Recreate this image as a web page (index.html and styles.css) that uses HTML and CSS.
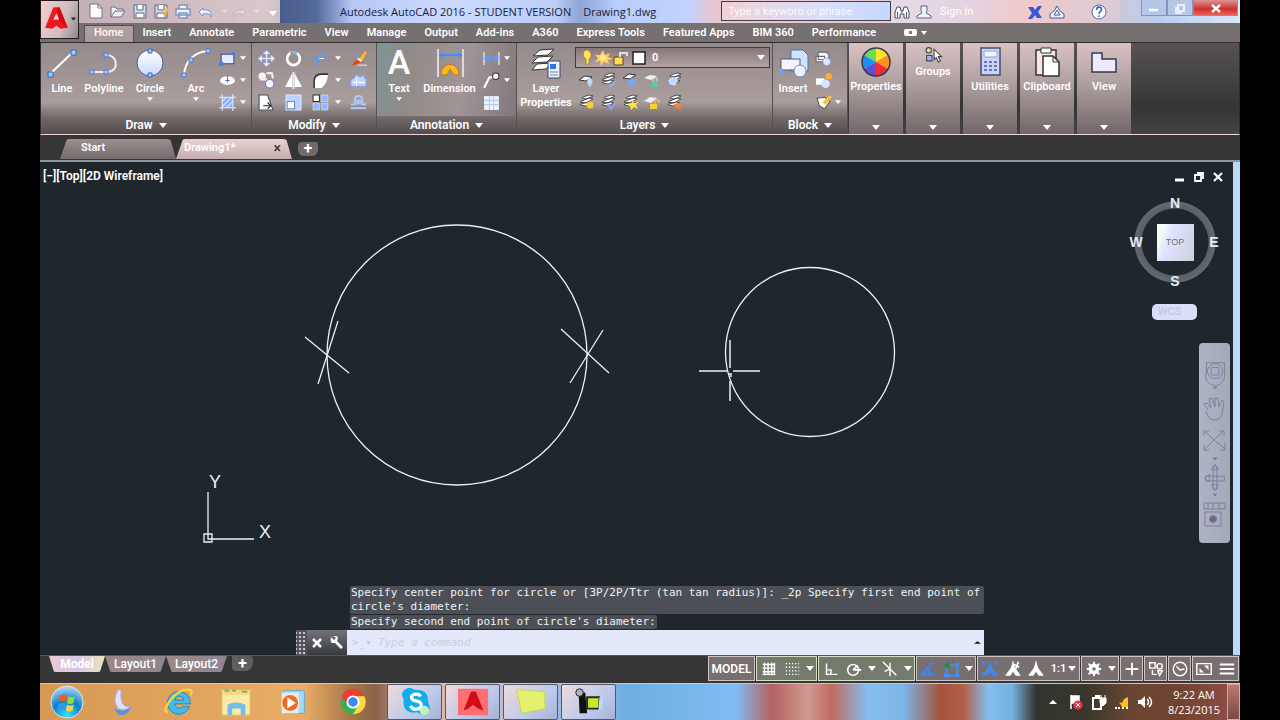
FILE: index.html
```html
<!DOCTYPE html>
<html lang="en">
<head>
<meta charset="utf-8">
<title>Autodesk AutoCAD 2016 - Drawing1.dwg</title>
<link rel="stylesheet" href="styles.css">
</head>
<body>
<svg class="defs" aria-hidden="true">
  <defs>
    <linearGradient id="whiteBlue" x1="0" y1="0" x2="0" y2="1"><stop offset="0" stop-color="#ffffff"/><stop offset="1" stop-color="#c9d8ff"/></linearGradient>
    <radialGradient id="orb" cx=".5" cy=".9" r=".9"><stop offset="0" stop-color="#3fe0ff"/><stop offset=".5" stop-color="#0f7fc8"/><stop offset="1" stop-color="#b8dcf4"/></radialGradient>
    <symbol id="tri" viewBox="0 0 8 5"><path d="M0 0h8L4 5z" fill="currentColor"/></symbol>
    <symbol id="layers" viewBox="0 0 16 16"><path d="M4 7l7-3 4 1-7 4-6-1zM3 10l7-2 4 1-6 3-6-1zM5 3l6-2 4 1-6 3-5-1z" fill="#fff" stroke="#333" stroke-width=".8"/></symbol>
    <symbol id="person" viewBox="0 0 20 20"><path d="M10 1v6M10 3L8 9 2 17h5l3-5 3 5h5l-6-8-2-6z" fill="currentColor" stroke="currentColor" stroke-width="1"/></symbol>
  </defs>
</svg>
<div class="app">
  <header class="top">
    <div class="titlebar">
      <div class="quick">
        <button aria-label="New"><svg viewBox="0 0 16 16"><path d="M2 1h8l4 4v10H2z" fill="#fffafa" stroke="#77738c"/><path d="M10 1v4h4" fill="none" stroke="#77738c"/></svg></button>
        <button aria-label="Open"><svg viewBox="0 0 16 16"><path d="M1 14V4h4l2 2h6v2M1 14l4-6h10l-4 6z" fill="#f5eeee" stroke="#66708c"/></svg></button>
        <button aria-label="Save"><svg viewBox="0 0 16 16"><path d="M2 2h12v13H2z" fill="#d8e0f5" stroke="#596780"/><path d="M5 2v5h6V2M4 14v-4h8v4" fill="#fff" stroke="#596780"/></svg></button>
        <button aria-label="Save as"><svg viewBox="0 0 16 16"><path d="M2 2h12v13H2z" fill="#d8e0f5" stroke="#596780"/><path d="M5 2v5h6V2M4 14v-4h8v4" fill="#fff" stroke="#596780"/><path d="M10 12l4-8 2 2-4 7z" fill="#ffae2e"/></svg></button>
        <button aria-label="Plot"><svg viewBox="0 0 16 16"><path d="M4 6V2h8v4M1 6h14v6H1zM4 10h8v5H4z" fill="#eef2ff" stroke="#8594bb" stroke-width="1.500"/></svg></button>
        <button aria-label="Undo"><svg viewBox="0 0 16 16"><path d="M2 9l4-4v2c6-1 9 2 8 7-1-3-3-4-8-3v2z" fill="#e9efff" stroke="#8594bb"/></svg></button>
        <button class="faint" aria-label="Undo list"><svg viewBox="0 0 16 16"><path d="M6 7h5l-2.500 3z" fill="#fff"/></svg></button>
        <button class="faint" aria-label="Redo"><svg viewBox="0 0 16 16"><path d="M14 9l-4-4v2C4 6 1 9 2 14c1-3 3-4 8-3v2z" fill="#e9e4ea" stroke="#a9a0aa"/></svg></button>
        <button class="faint" aria-label="Redo list"><svg viewBox="0 0 16 16"><path d="M6 7h5l-2.500 3z" fill="#fff"/></svg></button>
        <button aria-label="Customize"><svg viewBox="0 0 16 16"><path d="M5 8h8l-4 5z" fill="#fff"/></svg></button>
      </div>
      <div class="caption"><span>Autodesk AutoCAD 2016 - STUDENT VERSION</span><span>Drawing1.dwg</span></div>
      <input class="search" type="text" placeholder="Type a keyword or phrase" aria-label="Search help">
      <div class="info">
        <button aria-label="Search"><svg viewBox="0 0 16 16"><path d="M1 14V8l2-5h3l1 4h2l1-4h3l2 5v6h-5v-4H6v4z" fill="#fff" stroke="#444a5c"/><path d="M3.500 8v5M12.500 8v5M7 8h2" stroke="#444a5c"/></svg></button>
        <button class="sign" aria-label="Account"><svg viewBox="0 0 16 16"><path d="M5 2h6v5l-1 2 5 3v2H1v-2l5-3-1-2z" fill="#eaf0ff" stroke="#667"/></svg><span>Sign In</span></button>
        <button class="x-icon" aria-label="Exchange apps"><svg viewBox="0 0 16 16"><path d="M1 3h5l2 3 3-4h4l-4 6 4 6h-5l-2-3-3 4H1l4-6z" fill="#3456d8"/></svg></button>
        <button aria-label="Autodesk 360"><svg viewBox="0 0 16 16"><path d="M8 2l3 5 4 3v4H1v-4l4-3z" fill="#eef0ff" stroke="#4c5b8c"/><path d="M8 6l3 5H5z" fill="none" stroke="#4c5b8c"/></svg></button>
        <button class="help" aria-label="Help"><svg viewBox="0 0 16 16"><circle cx="8" cy="8" r="7" fill="#fff" stroke="#56658c"/><path d="M5.500 6c0-4 5-3.500 5-.5C10.500 7.500 8 7.500 8 10M8 11.500v1.500" fill="none" stroke="#2667dc" stroke-width="1.600"/></svg></button>
      </div>
      <div class="window-buttons"><button aria-label="Minimize"><svg viewBox="0 0 12 12"><path d="M1 8h9" stroke="#fff" stroke-width="2.500"/></svg></button><button aria-label="Restore"><svg viewBox="0 0 12 12"><path d="M4 3h6v6H4zM2 5v6h6" fill="none" stroke="#fff" stroke-width="1.500"/></svg></button><button class="close" aria-label="Close"><svg viewBox="0 0 12 12"><path d="M2 3l8 7M10 3l-8 7" stroke="#fff" stroke-width="2.500"/></svg></button></div>
    </div>
    <nav class="menu">
      <a class="current" href="#">Home</a><a href="#">Insert</a><a href="#">Annotate</a><a href="#">Parametric</a><a href="#">View</a><a href="#">Manage</a><a href="#">Output</a><a href="#">Add-ins</a><a href="#">A360</a><a href="#">Express Tools</a><a href="#">Featured Apps</a><a href="#">BIM 360</a><a href="#">Performance</a>
      <button class="ribbon-state" aria-label="Ribbon display"><svg viewBox="0 0 24 10"><rect x="0" y="1" width="13" height="7" rx="2" fill="#fff"/><path d="M5 3h3v3H5z" fill="#777"/><path d="M17 3h6l-3 4z" fill="#fff"/></svg></button>
    </nav>
    <button class="app-menu" aria-label="Application menu"><svg viewBox="0 0 36 36"><path d="M4 26L12 6h6l8 20-7 1-4-3-4 3z" fill="#f01820"/><path d="M12 18l3-6 3 6z" fill="#ffd9d9"/><path d="M15 8l3 12 8 6-8-20z" fill="#d80812"/><path d="M29 16h5l-2.500 3z" fill="#222"/></svg></button>
  </header>

  <div class="ribbon">
    <section class="panel draw">
      <div class="tools">
        <button class="big"><svg viewBox="0 0 32 32"><path d="M4 27L27 5" stroke="#fff" stroke-width="2"/><path d="M2 25h5v5H2zM25 3h5v5h-5z" fill="#a5ccff" stroke="#2868c8"/></svg><span>Line</span></button>
        <button class="big"><svg viewBox="0 0 32 32"><path d="M4 25h15c13 0 11-18-1-17" fill="none" stroke="#eee9ff" stroke-width="2"/><path d="M2 23h4v4H2zM16 23h4v4h-4zM16 6h4v4h-4z" fill="#a5ccff" stroke="#4a78d8"/></svg><span>Polyline</span></button>
        <button class="big"><svg viewBox="0 0 32 32"><circle cx="16" cy="16" r="13" fill="url(#whiteBlue)" stroke="#54607c"/><path d="M14 2h4v4h-4zM14 26h4v4h-4z" fill="#a5ccff" stroke="#2868c8"/></svg><span>Circle</span><svg class="tri"><use href="#tri"/></svg></button>
        <button class="big"><svg viewBox="0 0 32 32"><path d="M4 28C5 14 14 5 28 4" fill="none" stroke="#fff" stroke-width="2"/><path d="M2 26h4v4H2zM9 11h4v4H9zM26 2h4v4h-4z" fill="#a5ccff" stroke="#4a78d8"/></svg><span>Arc</span><svg class="tri"><use href="#tri"/></svg></button>
        <div class="minis with-arrows">
          <button aria-label="Rectangle"><svg viewBox="0 0 16 16"><path d="M2 4h12v9H2z" fill="#e8edff" stroke="#3c4e86"/><path d="M0 11h4v4H0zM12 2h3v3h-3z" fill="#3a85f0"/></svg></button><button aria-label="Rectangle list"><svg class="tri"><use href="#tri"/></svg></button>
          <button aria-label="Ellipse"><svg viewBox="0 0 16 16"><ellipse cx="8" cy="8" rx="7" ry="4" fill="#fff"/><path d="M8 3v7M6 8h4" stroke="#4a73d0"/></svg></button><button aria-label="Ellipse list"><svg class="tri"><use href="#tri"/></svg></button>
          <button aria-label="Hatch"><svg viewBox="0 0 16 16"><path d="M3 3h10v10H3z" fill="#83b1ff"/><path d="M3 7l4-4M3 12l9-9M7 13l6-6" stroke="#d7e8ff"/><path d="M3 0v16M13 0v16M0 3h16M0 13h16" stroke="#e6edff"/></svg></button><button aria-label="Hatch list"><svg class="tri"><use href="#tri"/></svg></button>
        </div>
      </div>
      <button class="panel-title">Draw <svg class="tri"><use href="#tri"/></svg></button>
    </section>

    <section class="panel modify">
      <div class="tools">
        <div class="minis">
          <button aria-label="Move"><svg viewBox="0 0 16 16"><path d="M8 0l4 4H9v3h3V4l4 4-4 4V9H9v3h3l-4 4-4-4h3V9H4v3L0 8l4-4v3h3V4H4z" fill="#edf1ff" stroke="#7b8ac5" stroke-width=".6"/></svg></button>
          <button aria-label="Rotate"><svg viewBox="0 0 16 16"><path d="M5 3a6 6 0 1 0 6 0" fill="none" stroke="#fff" stroke-width="2.500"/><path d="M3 1h8v4z" fill="#78b8e8"/></svg></button>
          <button aria-label="Trim"><svg viewBox="0 0 16 16"><path d="M0 8h15M10 1L4 15" stroke="#599cff" stroke-width="1.800"/><path d="M7 8h4" stroke="#fff"/></svg></button><button aria-label="Trim list"><svg class="tri"><use href="#tri"/></svg></button>
          <button aria-label="Erase"><svg viewBox="0 0 18 16"><path d="M9 9l7-9 2 1-5 10z" fill="#ffb430"/><path d="M8 8l5 3-3 2-9 3z" fill="#db4a18"/><path d="M8 8l4 3" stroke="#fff" stroke-width="2"/><path d="M8 15h10" stroke="#eef"/></svg></button>
          <button aria-label="Copy"><svg viewBox="0 0 16 16"><circle cx="4" cy="4" r="3.500" fill="#fff1ef"/><path d="M8 1h5l1 5M2 7h6v3" fill="none" stroke="#eee" stroke-width="2"/><circle cx="11" cy="11" r="4" fill="#f7f4ff" stroke="#687fc0"/></svg></button>
          <button aria-label="Mirror"><svg viewBox="0 0 16 16"><path d="M7 1v13H0zM9 1v13h7z" fill="#fff"/><path d="M8 0v16" stroke="#dbe8ff" stroke-width="2"/></svg></button>
          <button aria-label="Fillet"><svg viewBox="0 0 16 16"><path d="M2 15V9q0-7 7-7h6q0 8-6 13z" fill="#fff"/><path d="M2 15V9q0-7 7-7h6" fill="none" stroke="#333" stroke-width="1.500"/></svg></button><button aria-label="Fillet list"><svg class="tri"><use href="#tri"/></svg></button>
          <button aria-label="Explode"><svg viewBox="0 0 18 16"><path d="M1 7l4-2 1-3 5 2 4-2v3l2 2v7H1z" fill="#bed4ff" stroke="#7da3ff"/><path d="M3 10h13M7 5v9" stroke="#fff"/></svg></button>
          <button aria-label="Stretch"><svg viewBox="0 0 16 16"><path d="M1 1h8l5 14H1z" fill="#fff" stroke="#44506a"/><path d="M5 11h6M9 8l3 3-3 3" stroke="#222" fill="none"/></svg></button>
          <button aria-label="Scale"><svg viewBox="0 0 16 16"><path d="M1 1h14v14H1z" fill="#bcd1ff" stroke="#e4eaff"/><path d="M2 7h7v7H2z" fill="#fff" stroke="#6989cb"/></svg></button>
          <button aria-label="Array"><svg viewBox="0 0 16 16"><path d="M1 1h6v6H1z" fill="#fff" stroke="#333"/><path d="M9 1h6v6H9zM1 9h6v6H1zM9 9h6v6H9z" fill="#91b7ff" stroke="#d7e4ff" stroke-width=".6"/></svg></button><button aria-label="Array list"><svg class="tri"><use href="#tri"/></svg></button>
          <button aria-label="Offset"><svg viewBox="0 0 18 16"><path d="M1 10h4V6q0-5 4-5t4 5v4h4M1 14h16" fill="none" stroke="#add2ff" stroke-width="1.800"/><path d="M6 10h6V6q-3-3-6 0z" fill="#aac2f3"/></svg></button>
        </div>
      </div>
      <button class="panel-title">Modify <svg class="tri"><use href="#tri"/></svg></button>
    </section>

    <section class="panel annotation">
      <div class="tools">
        <button class="big"><span class="letter" aria-hidden="true">A</span><span>Text</span><svg class="tri"><use href="#tri"/></svg></button>
        <button class="big"><svg viewBox="0 0 32 32"><path d="M4 2v28M29 2v28" stroke="#f8edf2" stroke-width="1.500"/><path d="M5 8h23" stroke="#438cff" stroke-width="2"/><path d="M5 8l4-3v6zM28 8l-4-3v6z" fill="#438cff"/><path d="M7 28c0-14 18-14 18 0h-5l-4-6-3 6z" fill="#ffb61c" stroke="#b57c22"/></svg><span>Dimension</span></button>
        <div class="minis with-arrows">
          <button aria-label="Linear"><svg viewBox="0 0 16 16"><path d="M1 2v12M15 2v12" stroke="#fff"/><path d="M2 8h12M5 5L2 8l3 3M11 5l3 3-3 3" stroke="#5b9aff" fill="none" stroke-width="1.600"/></svg></button><button aria-label="Linear list"><svg class="tri"><use href="#tri"/></svg></button>
          <button aria-label="Leader"><svg viewBox="0 0 16 16"><path d="M1 15L6 5h4" fill="none" stroke="#fff" stroke-width="2"/><circle cx="12" cy="4" r="3" fill="#fff" stroke="#333"/></svg></button><button aria-label="Leader list"><svg class="tri"><use href="#tri"/></svg></button>
          <button aria-label="Table"><svg viewBox="0 0 16 16"><path d="M1 2h14v13H1z" fill="#eef1ff"/><path d="M1 6h14M1 10h14M6 2v13M10 2v13" stroke="#bcc9ef"/></svg></button>
        </div>
      </div>
      <button class="panel-title">Annotation <svg class="tri"><use href="#tri"/></svg></button>
    </section>

    <section class="panel layers">
      <div class="tools">
        <button class="big"><svg viewBox="0 0 32 32"><path d="M10 3l14-1-6 6-15 1zM8 10l15-1-6 6-15 1zM7 17l14-1-5 6-14 1z" fill="#fff" stroke="#333"/><path d="M18 14h12v17H18z" fill="#eaf0ff" stroke="#3c4964"/><path d="M20 17h6v5h-6z" fill="#2878e8"/><path d="M20 25h8M20 28h8" stroke="#789"/></svg><span>Layer<br>Properties</span></button>
        <div class="layer-side">
          <button class="layer-select" aria-label="Current layer"><svg viewBox="0 0 74 18"><path d="M8 1c5 0 7 6 3 9v5H8v-5C4 7 5 2 8 1z" fill="#ffe34d" stroke="#8e7935" stroke-width=".6"/><path d="M25 1l2 5 5-2-2 4 5 2-5 1 1 4-5-2-3 4-1-5-5 1 3-4-3-3 5 0z" fill="#ffcd61"/><circle cx="25" cy="9" r="3" fill="#ffec8d"/><path d="M36 8h9v8h-9z" fill="#ffe04c" stroke="#55451f"/><path d="M42 8V4h7v3" fill="none" stroke="#e5dde8" stroke-width="2"/><path d="M55 3h12v12H55z" fill="#fff" stroke="#222" stroke-width="1.500"/></svg><span>0</span><svg class="tri"><use href="#tri"/></svg></button>
          <div class="layer-grid">
            <button aria-label="Layer off"><svg viewBox="0 0 16 16"><path d="M1 8l6-4 7 1-6 4z" fill="#fff" stroke="#333"/><path d="M11 6c6 1 3 6 1 9-4-4-3-8-1-9" fill="#b8d8ff"/></svg></button>
            <button aria-label="Isolate layer"><svg viewBox="0 0 16 16"><use href="#layers"/><path d="M9 12l2 3 4-6" stroke="#87adff" stroke-width="2" fill="none"/></svg></button>
            <button aria-label="Freeze layer"><svg viewBox="0 0 16 16"><path d="M1 6l6-4 7 1-6 4z" fill="#fff" stroke="#333"/><path d="M10 6v9M6 8l8 5M14 8l-8 5" stroke="#72a9ff" stroke-width="2"/></svg></button>
            <button aria-label="Lock layer"><svg viewBox="0 0 16 16"><path d="M0 6l6-3 7 1-6 4z" fill="#f7eef5"/><path d="M8 9h6v6H8z" fill="#5cc9a0"/><path d="M9 9V6h4v3" fill="none" stroke="#d6eee2"/></svg></button>
            <button aria-label="Make current"><svg viewBox="0 0 16 16"><use href="#layers"/><path d="M2 8q5-6 10 0l-3 6-6-2z" fill="#bddcff"/></svg></button>
            <button aria-label="Turn all on"><svg viewBox="0 0 16 16"><use href="#layers"/><circle cx="12" cy="11" r="3.500" fill="#ffca35"/></svg></button>
            <button aria-label="Unisolate"><svg viewBox="0 0 16 16"><use href="#layers"/><path d="M8 10l3 5 4-6" stroke="#84a3ff" stroke-width="2" fill="none"/></svg></button>
            <button aria-label="Thaw all"><svg viewBox="0 0 16 16"><use href="#layers"/><path d="M11 6l1 3 4-1-2 3 2 4-4-2-3 3-1-4-3-1 4-1z" fill="#ffe136"/></svg></button>
            <button aria-label="Unlock"><svg viewBox="0 0 16 16"><path d="M0 7l6-4 7 1-6 5z" fill="#f7eef5"/><path d="M6 10h7v5H6z" fill="#ffcf30"/><path d="M11 10V6h4v3" fill="none" stroke="#eac653"/></svg></button>
            <button aria-label="Match layer"><svg viewBox="0 0 16 16"><use href="#layers"/><path d="M8 10l6-1 1 6-6-1z" fill="#ff7c3a"/></svg></button>
          </div>
        </div>
      </div>
      <button class="panel-title">Layers <svg class="tri"><use href="#tri"/></svg></button>
    </section>

    <section class="panel block">
      <div class="tools">
        <button class="big"><svg viewBox="0 0 32 32"><path d="M14 3h12l5 5v16H14z" fill="#cfe2ff" stroke="#54719e"/><path d="M4 12h19v11H4z" fill="#f2f5ff" stroke="#4b5c7c"/><circle cx="23" cy="24" r="6" fill="#edf2ff" stroke="#6d8ac3"/><path d="M2 22h4v4H2z" fill="#65a9ff"/></svg><span>Insert</span></button>
        <div class="minis with-arrows">
          <button aria-label="Create block"><svg viewBox="0 0 16 16"><path d="M3 2h8l2 3v4H3zM1 6h8v5H1z" fill="#fffafa" stroke="#667"/><circle cx="11" cy="11" r="3.500" fill="#dfe8ff" stroke="#99a8cc"/></svg></button><span></span>
          <button aria-label="Edit block"><svg viewBox="0 0 16 16"><path d="M1 6h8v6H1z" fill="#fff"/><circle cx="10" cy="11" r="4" fill="#d5e3ff"/><circle cx="13" cy="4" r="3" fill="#ffac36"/></svg></button><span></span>
          <button aria-label="Edit attributes"><svg viewBox="0 0 16 16"><path d="M2 4l7-1 5 4-5 7-5-3z" fill="#fffce9" stroke="#555"/><path d="M7 8l7-7 2 2-6 7z" fill="#ffbd40"/></svg></button><button aria-label="Attribute list"><svg class="tri"><use href="#tri"/></svg></button>
        </div>
      </div>
      <button class="panel-title">Block <svg class="tri"><use href="#tri"/></svg></button>
    </section>

    <div class="folded">
      <button><svg viewBox="0 0 32 32"><path d="M16 16V2A14 14 0 0 1 28 9z" fill="#ffe52e"/><path d="M16 16L28 9a14 14 0 0 1 0 14z" fill="#ff8f20"/><path d="M16 16l12 7a14 14 0 0 1-12 7z" fill="#f52d32"/><path d="M16 16v14A14 14 0 0 1 4 23z" fill="#644bd8"/><path d="M16 16L4 23A14 14 0 0 1 4 9z" fill="#1b90f0"/><path d="M16 16L4 9a14 14 0 0 1 12-7z" fill="#69e052"/><circle cx="16" cy="16" r="14" fill="none" stroke="#333c4c" stroke-width="1.500"/></svg><span>Properties</span><svg class="tri"><use href="#tri"/></svg></button>
      <button><svg class="short" viewBox="0 0 16 16"><circle cx="4" cy="4" r="2.500" fill="#d9e98b" stroke="#444"/><path d="M2 9h5v5H2z" fill="#a9b4ff" stroke="#445"/><path d="M9 3v10l2-2 2 4 2-1-2-4h3z" fill="#fff" stroke="#444"/></svg><span>Groups</span><svg class="tri"><use href="#tri"/></svg></button>
      <button><svg viewBox="0 0 32 32"><path d="M7 2h19v27H7z" fill="#c9d4f6" stroke="#46506b" stroke-width="1.500"/><path d="M10 5h13v6H10z" fill="#eef4ff" stroke="#93a0ca"/><path d="M10 16h3m2 0h3m2 0h3M10 20h3m2 0h3m2 0h3M10 24h3m2 0h3m2 0h3" stroke="#6677ba" stroke-width="2"/></svg><span>Utilities</span><svg class="tri"><use href="#tri"/></svg></button>
      <button><svg viewBox="0 0 32 32"><path d="M5 4h20v25H5z" fill="#f7e8df" stroke="#333" stroke-width="1.500"/><path d="M10 2h10v5H10z" fill="#fff" stroke="#333"/><path d="M12 10h10l6 6v14H12z" fill="#fff" stroke="#333" stroke-width="1.500"/><path d="M22 10v6h6" fill="none" stroke="#333"/></svg><span>Clipboard</span><svg class="tri"><use href="#tri"/></svg></button>
      <button><svg viewBox="0 0 32 32"><path d="M4 7h10v6h14v13H4z" fill="#eee9ff" stroke="#36384c" stroke-width="1.500"/></svg><span>View</span><svg class="tri"><use href="#tri"/></svg></button>
    </div>
  </div>

  <nav class="files">
    <a href="#">Start</a>
    <a class="open" href="#"><span class="name">Drawing1*</span><span class="x">×</span></a>
    <button aria-label="New drawing">+</button>
  </nav>

  <main class="canvas">
    <svg class="drawing" viewBox="40 162 1193 493" preserveAspectRatio="xMinYMin meet" role="img" aria-label="Two circles">
      <g fill="none" stroke="#e6f2fa" stroke-width="1.300">
        <circle cx="457" cy="355" r="130"/><circle cx="810" cy="352" r="84.500"/>
        <path d="M305 337L349 373M338 321L318 384M561 329L609 373M603 330L570 383"/>
        <path d="M208 492v47h46M204 534h8v8h-8z"/>
        <path d="M699 371h29M733 371h27M730 340v28M730 381v20M728 374h3v3" stroke-width="1.500"/>
      </g>
      <g class="axis"><text x="209" y="488">Y</text><text x="259" y="538">X</text></g>
    </svg>
    <div class="view-label">[−][Top][2D Wireframe]</div>
    <div class="view-window"><button aria-label="Minimize view"><svg viewBox="0 0 10 10"><path d="M0 8h9" stroke="#fff" stroke-width="3"/></svg></button><button aria-label="Restore view"><svg viewBox="0 0 10 10"><path d="M3 1h6v5H7M1 3h6v6H1z" fill="none" stroke="#fff" stroke-width="1.800"/></svg></button><button aria-label="Close view"><svg viewBox="0 0 10 10"><path d="M1 1l8 8M9 1L1 9" stroke="#fff" stroke-width="2.200"/></svg></button></div>
    <div class="compass"><span class="n">N</span><span class="w">W</span><button>TOP</button><span class="e">E</span><span class="s">S</span></div>
    <button class="wcs">WCS</button>
    <div class="navbar">
      <button aria-label="Steering wheel"><svg viewBox="0 0 24 34"><path d="M3 5h19v13a10 10 0 1 1-19-3z"/><circle cx="12" cy="14" r="8"/><path d="M8 10h8v8H8z"/><path class="dot" d="M10 31h4l-2 2z"/></svg></button>
      <button aria-label="Pan"><svg viewBox="0 0 24 24"><path d="M5 13L1 7l3-1 4 5-2-9 3-1 3 9V1h3l1 9 3-7 2 2-2 12q-2 6-8 6t-8-9"/></svg></button>
      <button aria-label="Zoom"><svg viewBox="0 0 24 30"><path d="M2 2l20 17M20 1L1 20M1 6V1h5M16 1h5v5M1 15v5h5M22 13v7h-5"/><path class="dot" d="M10 28h4l-2 2z"/></svg></button>
      <button aria-label="Orbit"><svg viewBox="0 0 24 34"><path d="M10 3h4v24h-4zM2 13h20v5H2zM12 0l4 6H8zM12 28l-4-6h8zM1 15l5-4v8z"/><path class="dot" d="M10 32h4l-2 2z"/></svg></button>
      <button aria-label="Show motion"><svg viewBox="0 0 24 28"><path d="M1 2h21v6H1zM5 2v6M10 2v6M16 2v6M2 11h16v14H2z"/><circle class="dot" cx="10" cy="18" r="3.500"/></svg></button>
    </div>
    <div class="command">
      <p>Specify center point for circle or [3P/2P/Ttr (tan tan radius)]: _2p Specify first end point of circle's diameter:</p>
      <p>Specify second end point of circle's diameter:</p>
      <div class="command-line">
        <span class="grip"></span>
        <button aria-label="Close command line"><svg viewBox="0 0 14 14"><path d="M3 3l8 8M11 3l-8 8" stroke="#fff" stroke-width="2.500"/></svg></button>
        <button aria-label="Customize command line"><svg viewBox="0 0 14 14"><path d="M1 1l3 3 2-2-3-2q4-1 5 2l-1 3 6 6-2 2-6-6-3 0Q0 6 1 1z" fill="#fff"/></svg></button>
        <label><span>&gt;_▾</span><input type="text" placeholder="Type a command" aria-label="Command"></label>
        <button class="recent" aria-label="History"><svg viewBox="0 0 8 5"><path d="M0 4l4-3 4 3z" fill="#111"/></svg></button>
      </div>
    </div>
  </main>

  <footer class="status">
    <nav class="layouts"><a class="current" href="#">Model</a><a href="#">Layout1</a><a href="#">Layout2</a><button aria-label="New layout">+</button></nav>
    <div class="toggles">
      <div class="g1"><button>MODEL</button></div>
      <div class="g2"><button aria-label="Grid"><svg viewBox="0 0 20 20"><path d="M5 3v14M9 3v14M13 3v14M3 5h14M3 9h14M3 13h14M16 3v14M3 16h14" stroke="#fff" stroke-width="1.500"/></svg></button><button aria-label="Snap"><svg viewBox="0 0 20 20"><path d="M3 4h15M3 8h15M3 12h15M3 16h15" stroke="#fff" stroke-width="1.500" stroke-dasharray="1.500 2"/></svg></button><button aria-label="Snap list"><svg class="tri"><use href="#tri"/></svg></button></div>
      <div class="g3"><button aria-label="Ortho"><svg viewBox="0 0 20 20"><path d="M5 4v12h12M5 11h5v5" fill="none" stroke="#fff" stroke-width="1.600"/></svg></button><button aria-label="Polar"><svg viewBox="0 0 20 20"><circle cx="9" cy="11" r="6" fill="none" stroke="#fff" stroke-width="1.800"/><path d="M9 11h9M9 11l5-5" fill="none" stroke="#fff" stroke-width="1.800"/></svg></button><button aria-label="Polar list"><svg class="tri"><use href="#tri"/></svg></button><button aria-label="Isodraft"><svg viewBox="0 0 20 20"><path d="M2 2l15 15M10 3v15M4 13l5-3" stroke="#fff" stroke-width="1.600"/></svg></button><button aria-label="Isodraft list"><svg class="tri"><use href="#tri"/></svg></button></div>
      <div class="g4"><button aria-label="Object tracking"><svg viewBox="0 0 20 20"><path d="M2 17L15 3M2 16h16M8 10q4 1 4 6" fill="none" stroke="#3589ff" stroke-width="2.200"/></svg></button><button aria-label="Object snap"><svg viewBox="0 0 20 20"><path d="M5 6h12v11H5z" fill="none" stroke="#438eff" stroke-width="2"/><path d="M2 15h6v4H2zM15 3h4v4h-4zM15 15h4v4h-4z" fill="#438eff"/><circle cx="6" cy="6" r="3" fill="#0a9b36"/></svg></button><button aria-label="Object snap list"><svg class="tri"><use href="#tri"/></svg></button></div>
      <div class="g5"><button class="blue" aria-label="Annotation visibility"><svg viewBox="0 0 20 20"><path d="M2 2h4M2 2v4M18 2h-4M18 2v4M2 18v-4M18 18v-4" fill="none" stroke="#4388ef" stroke-width="2"/><use href="#person"/></svg></button><button aria-label="Autoscale"><svg viewBox="0 0 20 20"><use href="#person"/><path d="M11 5l6 3M16 2l-3 8" stroke="#fff" stroke-width="2"/></svg></button><button aria-label="Annotation scale"><svg viewBox="0 0 20 20"><use href="#person"/></svg></button><button class="scale">1:1<svg class="tri"><use href="#tri"/></svg></button></div>
      <div class="g6"><button aria-label="Workspace"><svg viewBox="0 0 20 20"><circle cx="10" cy="10" r="4" fill="none" stroke="#fff" stroke-width="4"/><path d="M10 2v3M10 15v3M2 10h3M15 10h3M4 4l3 3M13 13l3 3M16 4l-3 3M7 13l-3 3" stroke="#fff" stroke-width="2"/></svg></button><button aria-label="Workspace list"><svg class="tri"><use href="#tri"/></svg></button></div>
      <div class="g7"><button aria-label="Monitor"><svg viewBox="0 0 20 20"><path d="M10 3v14M3 10h14" stroke="#fff" stroke-width="2"/></svg></button></div>
      <div class="g7"><button aria-label="Isolate"><svg viewBox="0 0 20 20"><path d="M3 3h6v6H3zM6 11v5h5" fill="none" stroke="#fff" stroke-width="1.600"/><circle cx="14" cy="7" r="3" fill="none" stroke="#fff" stroke-width="1.600"/><path d="M12 12h5l-3 5z" fill="none" stroke="#fff" stroke-width="1.600"/></svg></button></div>
      <div class="g7"><button aria-label="Performance"><svg viewBox="0 0 20 20"><circle cx="10" cy="10" r="7.500" fill="none" stroke="#fff" stroke-width="1.600"/><path d="M6 7l4 4 5-1" fill="none" stroke="#fff" stroke-width="1.500"/></svg></button></div>
      <div class="g8"><button aria-label="Clean screen"><svg viewBox="0 0 20 20"><path d="M2 4h16v12H2z" fill="none" stroke="#fff" stroke-width="1.600"/><path d="M5 14V9l5 5zM15 6v5l-5-5z" fill="#fff"/></svg></button><button aria-label="Customization"><svg viewBox="0 0 20 20"><path d="M2 5h16M2 10h16M2 15h16" stroke="#fff" stroke-width="2"/></svg></button></div>
    </div>
  </footer>

  <div class="taskbar">
    <div class="pins">
      <button aria-label="Start menu"><svg viewBox="0 0 36 36"><circle cx="18" cy="18" r="17" fill="url(#orb)" stroke="#d9edff"/><path d="M10 12q4-3 8-1l-1 7q-4-2-8 0z" fill="#f35a24"/><path d="M19 12q4 2 7 0l-1 7q-4 2-7 0z" fill="#91df3f"/><path d="M9 20q4-2 8 0l-1 7q-3-2-7-1z" fill="#2f9cf4"/><path d="M18 21q4 2 7 0l-1 6q-4 2-7 0z" fill="#ffd735"/></svg></button>
      <button aria-label="Launcher"><svg viewBox="0 0 36 36"><path d="M14 5q-7 11 0 20 7 3 13-2-12 2-10-18z" fill="#dfe2ff" stroke="#a8aaf0"/><path d="M9 24q9 7 19-1-5 11-14 8z" fill="#4e94e8"/></svg></button>
      <button aria-label="Internet Explorer"><svg viewBox="0 0 36 36"><path d="M18 7a12 12 0 1 0 11 16h-7q-4 4-8-1v-2h16Q30 8 18 7zm-4 9q1-5 5-4 4 0 4 4z" fill="#43b9ed" stroke="#1e89bd"/><path d="M6 29Q0 28 9 16T29 5q4 0 1 6" fill="none" stroke="#ffd338" stroke-width="2.500"/></svg></button>
      <button aria-label="Explorer"><svg viewBox="0 0 36 36"><path d="M3 5h30v27H3z" fill="#f7d874"/><path d="M4 10h28v21H4z" fill="#fae9a7"/><path d="M6 6h5M14 6h4M24 7h6" stroke="#63b36a" stroke-width="2"/><path d="M9 32v-11q9-5 19 0v11h-5v-7h-9v7z" fill="#73bdeb"/></svg></button>
      <button aria-label="Media Player"><svg viewBox="0 0 36 36"><path d="M8 6h22v24H10z" fill="#a7dbf5" stroke="#69a7d4"/><path d="M6 8h18v22H6z" fill="#dceef7"/><circle cx="15" cy="19" r="9" fill="#f26b22" stroke="#fff"/><path d="M12 13l9 6-9 6z" fill="#fff"/></svg></button>
      <button aria-label="Chrome"><svg viewBox="0 0 36 36"><circle cx="18" cy="18" r="13" fill="#35b34b"/><path d="M6 12A13 13 0 0 1 30 12H18l-6 9z" fill="#ee3d32"/><path d="M30 12a13 13 0 0 1-12 19l6-10-3-9z" fill="#ffd83b"/><circle cx="18" cy="18" r="6" fill="#4285f4" stroke="#fff" stroke-width="2"/></svg></button>
    </div>
    <div class="running">
      <button aria-label="Skype"><svg viewBox="0 0 36 36"><path d="M7 5q5-4 10 0 16-1 15 14 4 6-1 11-5 3-10-1Q4 31 6 15 2 9 7 5z" fill="#13aeea"/><path d="M24 12q-2-3-7-2-5 2-1 6l7 2q4 5-1 7-6 2-9-3" fill="none" stroke="#fff" stroke-width="3.500"/><circle cx="28" cy="27" r="5" fill="#baf5bd"/></svg></button>
      <button aria-label="AutoCAD"><svg viewBox="0 0 36 36"><path d="M2 4h32v28H2z" fill="#ff6f72"/><path d="M8 27l8-20h5l8 20-6-2-5-4-5 4z" fill="#d30c16"/></svg></button>
      <button aria-label="Sticky Notes"><svg viewBox="0 0 36 36"><path d="M3 5l29 2 1 18-25 5z" fill="#e4f16c" stroke="#c8d454"/></svg></button>
      <button aria-label="Recorder"><svg viewBox="0 0 36 36"><path d="M7 8h7l2 22H8z" fill="#111"/><circle cx="8" cy="8" r="4" fill="#a6b3cc" stroke="#222"/><path d="M16 13h13v12H16z" fill="#c8e62b" stroke="#1d2a28" stroke-width="2"/><path d="M29 13l4-3-1 15-4 3z" fill="#b9def3"/></svg></button>
    </div>
    <div class="tray">
      <button aria-label="Hidden icons"><svg viewBox="0 0 16 16"><path d="M4 10l4-4 4 4z" fill="#fff"/></svg></button>
      <button aria-label="Action center"><svg viewBox="0 0 16 16"><path d="M3 1v14M4 2h7v7H4z" fill="#fff" stroke="#fff" stroke-width="1.500"/><circle cx="10" cy="11" r="4.500" fill="#e93442"/><path d="M8 9l4 4M12 9l-4 4" stroke="#fff"/></svg></button>
      <button aria-label="Power"><svg viewBox="0 0 16 16"><path d="M2 4h8v11H2zM4 2h4v2" fill="none" stroke="#fff" stroke-width="2"/><path d="M9 4h6v5l-3 3-3-3zM10 1v3M14 1v3" fill="#fff" stroke="#fff"/></svg></button>
      <button aria-label="Network"><svg viewBox="0 0 16 16"><path d="M1 14h2M5 13v2M9 10v5M13 4v11" stroke="#fff" stroke-width="2"/><path d="M5 8l3 1 2-4 4-2v10H8z" fill="#ffbc28"/></svg></button>
      <button aria-label="Volume"><svg viewBox="0 0 16 16"><path d="M1 6h3l4-4v12l-4-4H1z" fill="#fff"/><path d="M10 5q3 3 0 6M12 3q5 5 0 10" fill="none" stroke="#fff" stroke-width="1.500"/></svg></button>
      <time>9:22 AM<br>8/23/2015</time>
      <button class="desktop" aria-label="Show desktop"></button>
    </div>
  </div>
</div>
</body>
</html>
```
FILE: styles.css
```css
* { box-sizing: border-box; }
body { margin: 0; background: #000; color: #fff; font: 600 11px/14px Roboto, "Open Sans", sans-serif; }
button, input { font: inherit; color: inherit; }
button { padding: 0; border: 0; background: none; display: flex; align-items: center; justify-content: center; }
a { color: inherit; text-decoration: none; }
svg { display: block; flex: none; }
.defs { position: absolute; width: 0; height: 0; }
.tri { width: 8px; height: 5px; }
.app { min-height: 100vh; margin: 0 40px; display: flex; flex-direction: column; background: #363636; }

.top { position: relative; }
.titlebar { height: 24px; display: flex; padding-left: 40px; background: linear-gradient(90deg, #c0acb1 0, #d9c7cb 19%, #cdbfc9 20%, #485c8d 20%, #536998 23%, #b5c7f5 26%, #cddaff 34%, #bccdf7 43%, #8da4d4 45%, #b8cdfa 48%, #c1d3ff 54%, #e6c6d0 56%, #ead7dc 100%); border-bottom: 1px solid #766e75; }
.quick { width: 200px; display: flex; padding: 3px 0 0 5px; }
.quick button { width: 22px; height: 16px; flex: 0 1 22px; }
.quick svg { width: 16px; height: 16px; }
.quick button:nth-child(n+7) { flex-basis: 16px; }
.faint { opacity: .5; }
.caption { flex: 1; display: flex; gap: 12px; align-items: center; padding-left: 60px; color: #17203c; font: 400 11px/14px "Open Sans", sans-serif; white-space: nowrap; }
.search { width: 170px; height: 20px; margin-top: 1px; padding: 0 6px; border: 1px solid #443f47; background: linear-gradient(90deg, #eed2d5, #d8def9 60%, #c6d8ff); font-size: 11px; font-weight: 400; }
.search::placeholder { color: #fff; opacity: .8; }
.info { width: 229px; display: flex; align-items: center; gap: 6px; padding-left: 3px; background: linear-gradient(90deg, #e3dbe6, #e4d2e0 35%, #f0c9c8 60%, #d9cbd8); }
.info svg { width: 16px; height: 16px; }
.sign { width: 105px; gap: 8px; justify-content: flex-start; font-weight: 400; }
.help { margin-left: 20px; }
.window-buttons { width: 120px; display: flex; justify-content: flex-end; align-items: flex-start; padding-right: 2px; background: linear-gradient(90deg, #cec7da, #bbcdf0 30%, #d8e6fa); }
.window-buttons button { width: 26px; height: 16px; background: #b5c6e6; border: 1px solid #8593b5; border-top: 0; }
.window-buttons .close { width: 45px; background: linear-gradient(#dc9494, #ce3030 60%, #ed6258); }
.window-buttons svg { width: 12px; height: 12px; }
.menu { height: 18px; display: flex; align-items: center; gap: 18px; padding-left: 44px; background: #767071; white-space: nowrap; }
.menu .current { height: 17px; margin-right: -9px; padding: 0 9px; align-self: flex-end; background: linear-gradient(#b09fa1, #a79a9b); border: 1px solid #544e4e; border-bottom: 0; color: #fff1f3; }
.ribbon-state { margin-left: 10px; }
.ribbon-state svg { width: 24px; height: 10px; }
.app-menu { position: absolute; left: 0; top: 0; width: 39px; height: 39px; border: 1px solid #241d20; background: linear-gradient(110deg, #f3ced0, #cfbdc0 60%, #94868a); }
.app-menu svg { width: 37px; height: 37px; }

.ribbon { min-height: 93px; display: flex; border: 1px solid #302c2d; border-bottom: 1px solid #f2d7d8; background: linear-gradient(#575353, #363535 70%, #444); text-shadow: 0 1px 1px #7d7175; }
.panel { display: flex; flex-direction: column; border-right: 1px solid #575152; background: linear-gradient(#958a8b, #a99d9d 65%, #7f7575 78%, #514c4c); }
.tools { flex: 1; display: flex; align-items: flex-start; padding-top: 4px; }
.panel-title { height: 18px; gap: 6px; background: linear-gradient(#756d6e, #514c4d); font-size: 12px; }
.big { flex-direction: column; justify-content: flex-start; text-align: center; }
.big > svg:first-child, .letter { width: 32px; height: 32px; }
.big > span:not(.letter) { margin-top: 3px; }
.big .tri { margin-top: 1px; width: 6px; height: 4px; }
.minis { display: grid; grid-auto-rows: 22px; justify-items: center; }
.minis svg:not(.tri) { width: 17px; height: 17px; }
.minis .tri { width: 6px; height: 4px; }
.with-arrows { grid-template-columns: 22px 10px; }
.draw { width: 211px; }
.draw .big { width: 42px; }
.draw .big:nth-child(3) { width: 50px; }
.draw .with-arrows { margin-left: -1px; }
.modify { width: 125px; }
.modify .minis { grid-template-columns: 28px 27px 27px 8px 33px; }
.annotation { width: 140px; background: linear-gradient(100deg, #819493 0, #918b8a 25%, #a09596 60%, #817678); }
.annotation .big { width: 44px; }
.annotation .big + .big { width: 57px; }
.annotation .with-arrows { margin-left: 2px; }
.letter { font: 500 34px/30px Roboto, sans-serif; }
.layers { width: 256px; }
.layers .big { width: 58px; }
.layer-side { flex: 1; padding-right: 2px; }
.layer-select { width: 100%; height: 21px; justify-content: flex-start; padding: 0 4px 0 2px; border: 1px solid #3f3a3b; background: linear-gradient(#857778, #b5a2a3); }
.layer-select svg:first-child { width: 74px; height: 18px; }
.layer-select span { flex: 1; text-align: left; }
.layer-grid { display: grid; grid-template-columns: repeat(5, 22px); grid-auto-rows: 22px; justify-items: center; padding-top: 1px; }
.layer-grid svg { width: 16px; height: 16px; }
.block { width: 75px; }
.block .big { width: 40px; }
.block .with-arrows { grid-template-columns: 20px 10px; }
.folded { display: flex; gap: 3px; padding-left: 1px; }
.folded button { width: 54px; flex-direction: column; justify-content: flex-start; padding: 3px 0 4px; background: linear-gradient(#dbc1c3, #ad9fa0 45%, #716768); }
.folded svg:first-child { width: 32px; height: 32px; }
.folded button .short:first-child { width: 20px; height: 17px; }
.folded span { margin-top: 2px; }
.folded .tri { margin-top: auto; }

.files { min-height: 27px; display: flex; align-items: flex-end; padding: 0 20px 1px; background: #353535; border-bottom: 2px solid #8b969d; }
.files a { width: 116px; height: 20px; display: flex; align-items: center; padding: 0 11px 2px 21px; border-radius: 9px 9px 0 0; background: linear-gradient(#9b8e8f, #736b6c); clip-path: polygon(6% 0, 95% 0, 100% 100%, 0 100%); }
.files .open { padding-left: 8px; background: linear-gradient(#edd2d3, #c4adae); }
.files .name { flex: 1; }
.files .x { color: #3e3437; font-size: 14px; }
.files button { width: 20px; height: 14px; margin: 0 6px 3px; border-radius: 4px 2px 6px 6px; background: #716a6a; font-size: 16px; }

.canvas { position: relative; flex: 1; background: #20272c; border-right: 7px solid #b9d9f8; }
.drawing { position: absolute; width: 100%; height: 100%; }
.axis { fill: #e6f2fa; font: 400 18px "Liberation Sans", sans-serif; }
.view-label { position: absolute; left: 3px; top: 7px; font-size: 12px; }
.view-window { position: absolute; right: 10px; top: 10px; display: flex; gap: 9px; }
.view-window svg { width: 10px; height: 10px; }
.compass { position: absolute; right: 10px; top: 32px; width: 96px; height: 96px; display: grid; grid-template: 18px 1fr 18px / 18px 1fr 18px; place-items: center; color: #e4ebff; font: 700 14px/16px "Liberation Sans", sans-serif; background: radial-gradient(circle, transparent 33px, #596067 34px, #62696f 40px, transparent 41px); }
.compass .n, .compass .s { grid-column: 1 / -1; }
.compass button { width: 37px; height: 37px; background: linear-gradient(110deg, #f0fff8 15%, #dfe3ff 35%, #cbd1dc); color: #6c707b; font: 400 9px/12px "Liberation Sans", sans-serif; }
.wcs { position: absolute; right: 36px; top: 142px; width: 45px; height: 16px; padding-right: 10px; border-radius: 5px; background: #d9dff8; color: #c5cae2; font-size: 11px; }
.navbar { position: absolute; right: 3px; top: 181px; width: 31px; height: 200px; display: flex; flex-direction: column; align-items: center; padding: 15px 0 12px; justify-content: space-between; border-radius: 4px; background: linear-gradient(90deg, #b0b2c5, #a0abba); }
.navbar svg { width: 24px; height: 32px; fill: none; stroke: #7d8096; stroke-width: 1; }
.navbar .dot { fill: #686b80; }
.command { position: absolute; left: 0; right: -7px; bottom: 0; width: 688px; max-width: 100%; margin: 0 auto; font: 400 11px/14px "DejaVu Sans Mono", monospace; }
.command p { width: fit-content; max-width: 634px; margin: 0 0 1px 54px; padding: 0 1px; background: #4c5056; color: #eef3f6; border-radius: 2px; }
.command-line { display: flex; height: 25px; align-items: center; background: #e3e8fb; }
.command-line > button { width: 20px; height: 25px; background: linear-gradient(#747279, #363a40); }
.command-line svg { width: 14px; height: 14px; }
.grip { width: 11px; height: 25px; background: radial-gradient(#c8c7cf 30%, #55515c 50%) 2px 5px / 4px 4px; }
.command-line label { flex: 1; display: flex; gap: 6px; padding-left: 5px; color: #c2c6de; }
.command-line input { flex: 1; min-width: 0; padding: 0; border: 0; background: transparent; color: #20272c; font-style: italic; }
.command-line input::placeholder { color: #c9cde2; opacity: 1; }
.command-line .recent { width: 14px; background: none; }
.command-line .recent svg { width: 7px; height: 5px; }

.status { height: 28px; display: flex; justify-content: space-between; border-top: 1px solid #555; background: #373637; }
.layouts { display: flex; align-items: flex-start; padding-left: 9px; }
.layouts a { width: 61px; height: 16px; display: flex; align-items: center; justify-content: center; border-radius: 0 0 7px 7px; background: linear-gradient(90deg, #9c8784, #8e8592); clip-path: polygon(0 0, 100% 0, 91% 100%, 9% 100%); font-weight: 500; font-size: 12px; }
.layouts .current { width: 56px; background: linear-gradient(90deg, #ebcad0, #d4c7e6 50%, #e9e4be); font-weight: 700; }
.layouts button { width: 21px; height: 15px; margin-left: 5px; background: #605d5d; border-radius: 0 3px 8px 4px; font-size: 16px; }
.toggles { display: flex; gap: 1px; padding: 0 1px 2px; }
.toggles > div { display: flex; align-items: stretch; justify-content: space-around; border: 1px solid #d0c4c2; background: #776f70; }
.toggles svg:not(.tri) { width: 18px; height: 18px; }
.g1 { width: 47px; font-size: 12px; }
.g2 { width: 61px; }
.toggles .g2, .toggles .g3 { background: #747b6d; border-color: #d4dfc6; }
.g3 { width: 97px; }
.g4 { width: 60px; }
.g5 { width: 103px; }
.g6 { width: 38px; }
.g7 { width: 23px; }
.g8 { width: 47px; }
.blue { color: #4388ef; }
.scale { gap: 2px; }

.taskbar { min-height: 37px; display: flex; align-items: stretch; border-top: 1px solid #e5bfa3; background: linear-gradient(90deg, #d79853 0, #e9ad67 22%, #a47549 26%, #8a654b 28%, #e2b69c 32%, #b9bee0 40%, #70aee2 49%, #80bcf3 58%, #b6625f 61%, #cf9a90 64%, #bf6a60 66%, #84bff0 69%, #7db4e6 72%, #a4543c 75%, #b0604a 77%, #84bfee 79%, #75b2dd 81%, #343530 83%, #38352c 87%, #6a4632 91%, #704330 95%, #925047); }
.pins { display: flex; padding-right: 3px; }
.pins button { width: 57px; }
.pins button:first-child { width: 53px; }
.pins button:last-child { width: 63px; }
.pins svg { width: 34px; height: 36px; }
.running { display: flex; gap: 3px; }
.running button { width: 55px; height: 36px; border: 1px solid #545865; border-radius: 2px; background: linear-gradient(135deg, #f1d9d9, #bccaeb 60%, #a7b3d6); }
.running svg { width: 34px; height: 34px; }
.tray { display: flex; align-items: center; margin-left: auto; }
.tray > button { width: 23px; }
.tray svg { width: 16px; height: 16px; }
.tray time { margin-left: 5px; width: 66px; font: 400 11px/15px "Open Sans", sans-serif; text-align: center; }
.tray .desktop { width: 13px; height: 36px; border: 1px solid #dfa3a0; background: linear-gradient(#bf7871, #794743); }
```
